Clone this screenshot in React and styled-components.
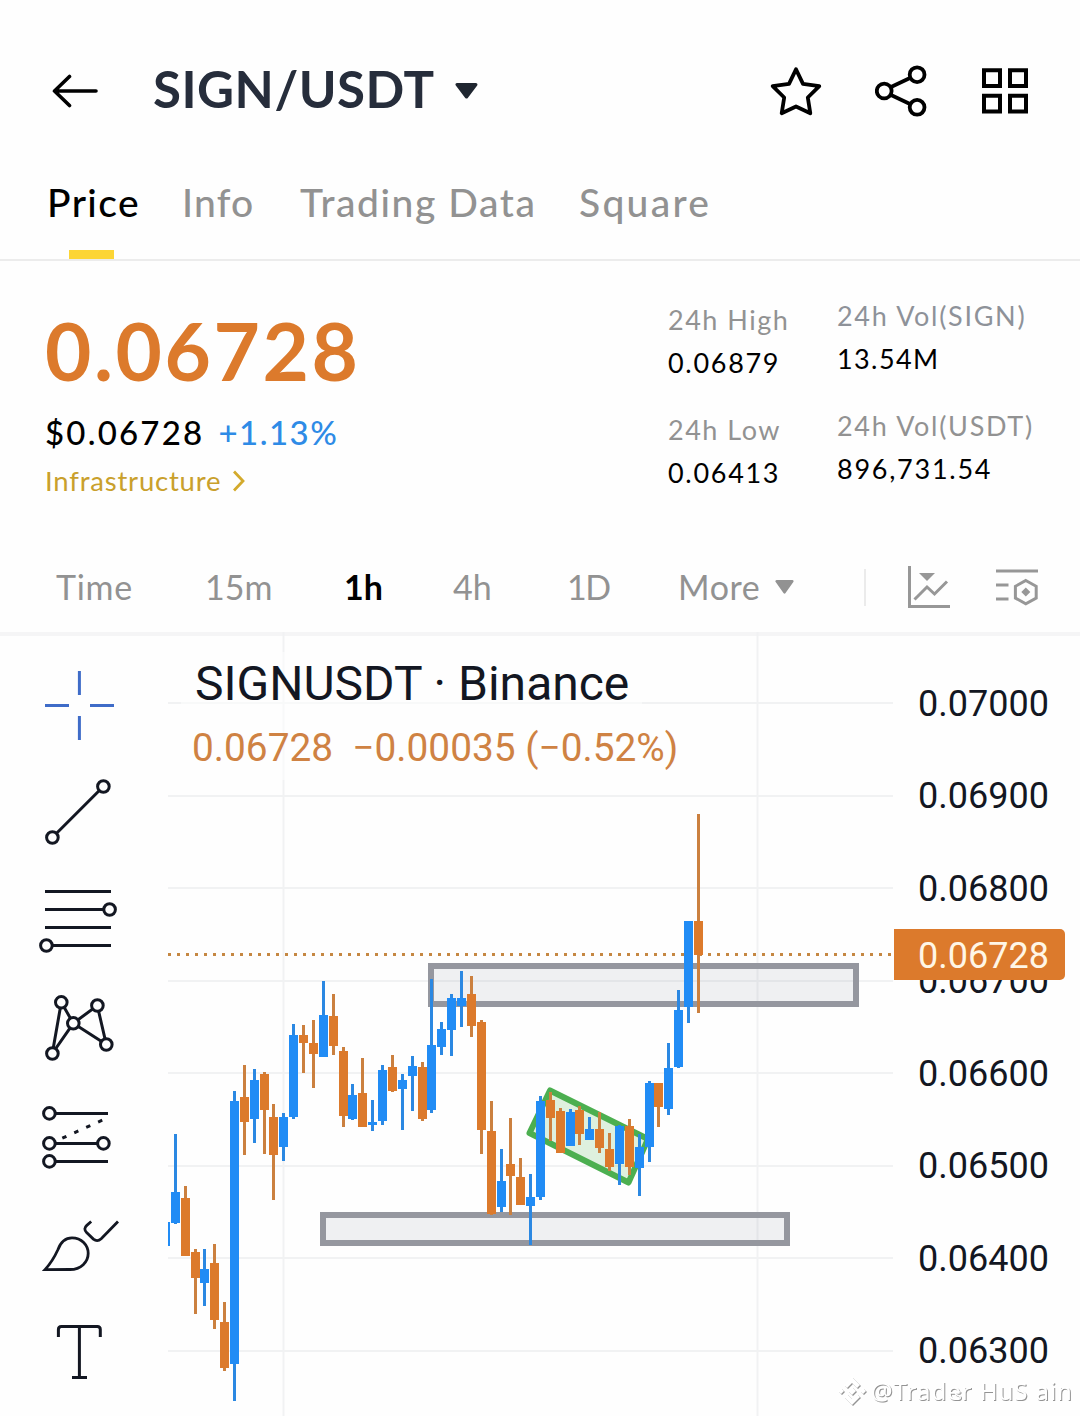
import React from "react";
import styled, { createGlobalStyle } from "styled-components";

const ORANGE = "#dc7a2c";
const BLUE = "#218cf5";

const GlobalStyle = createGlobalStyle`
  *, *::before, *::after { box-sizing: border-box; }
  body { margin: 0; background: #fefefe; }
`;

const Screen = styled.main`
  position: relative;
  width: 1080px;
  height: 1416px;
  overflow: hidden;
  display: flex;
  flex-direction: column;
  background: #fefefe;
  color: #000;
  font-family: Lato, "Open Sans", sans-serif;
  svg { display: block; flex: none; }
`;

const Text = styled.span`
  display: block;
  margin: 0;
  white-space: pre;
  font-size: ${(p) => p.$size}px;
  line-height: ${(p) => p.$line || p.$size}px;
  font-weight: ${(p) => p.$weight || 400};
  letter-spacing: ${(p) => p.$track || 0}px;
  color: ${(p) => p.$color || "inherit"};
`;

const Header = styled.header`
  height: 150px;
  padding: 32px 51px 0 52px;
  display: flex;
  align-items: center;
`;

const Pair = styled.div`
  display: flex;
  align-items: center;
  gap: 20px;
  margin-left: 55px;
  flex: 1;
  h1 { padding-bottom: 5px; }
`;

const Actions = styled.div`
  display: flex;
  align-items: center;
  gap: 53px;
`;

const Tabs = styled.nav`
  height: 111px;
  padding: 0 47px;
  display: grid;
  grid-template-columns: 135px 118px 279px auto;
  border-bottom: 2px solid #ececec;
`;

const Tab = styled.div`
  display: flex;
  flex-direction: column;
  justify-content: space-between;
  align-items: flex-start;
  padding-top: 28px;
`;

const Underline = styled.i`
  width: 45px;
  height: 9px;
  margin-left: 22px;
  background: #fcd535;
`;

const Summary = styled.section`
  height: 284px;
  display: grid;
  grid-template-columns: 668px 169px auto;
`;

const PriceBlock = styled.div`
  padding: 49px 0 0 45px;
  display: flex;
  flex-direction: column;
`;

const Line = styled.div`
  display: flex;
  align-items: center;
  gap: ${(p) => p.$gap}px;
  height: ${(p) => p.$h}px;
`;

const StatColumn = styled.dl`
  margin: 0;
  padding-top: ${(p) => p.$top}px;
  display: flex;
  flex-direction: column;
  gap: 24px;
`;

const Stat = styled.div`
  height: 86px;
`;

const Intervals = styled.nav`
  height: 87px;
  padding: 0 0 3px 56px;
  display: grid;
  grid-template-columns: 149px 139px 109px 114px 111px 186px 43px 88px auto;
  align-items: center;
`;

const Separator = styled.i`
  width: 2px;
  height: 37px;
  background: #ebebeb;
`;

const ChartArea = styled.section`
  flex: 1;
  display: grid;
  grid-template-columns: 168px 726px 186px;
  border-top: 4px solid #f5f5f6;
  font-family: Roboto, "Liberation Sans", sans-serif;
  color: #131722;
`;

const Toolbar = styled.div`
  padding-top: 15px;
`;

const Plot = styled.div`
  position: relative;
  svg { margin-top: -4px; }
`;

const Legend = styled.div`
  position: absolute;
  left: 13px;
  top: 16px;
  width: 461px;
  padding-left: 11px;
  background: rgba(254, 254, 254, 0.6);
  h2 { padding-left: 3px; }
`;

const Axis = styled.div`
  position: relative;
  padding: 22px 0 0 24px;
`;

const PriceTag = styled.div`
  position: absolute;
  left: 0;
  top: 293px;
  width: 171px;
  height: 51px;
  padding: 1px 0 0 24px;
  border-radius: 0 5px 5px 0;
  background: ${ORANGE};
`;

const Watermark = styled.div`
  position: absolute;
  left: 837px;
  top: 1375px;
  display: flex;
  align-items: center;
  gap: 4px;
  color: #fff;
  font-family: "Noto Sans", sans-serif;
  filter: drop-shadow(1px 1px 0.6px rgba(0, 0, 0, 0.42));
`;

const Stray = styled.span`
  position: absolute;
  left: 117px;
  top: 8px;
  font-size: 16px;
  line-height: 22px;
`;

const Caret = ({ w, h, color }) => (
  <svg width={w} height={h} viewBox="0 0 22 16" preserveAspectRatio="none">
    <path d="M2 1.5H20L11 14Z" fill={color} stroke={color} strokeWidth="3" strokeLinejoin="round" />
  </svg>
);

const Dots = ({ points }) => points.map(([x, y]) => <circle key={`${x},${y}`} cx={x} cy={y} r="5.8" fill="#fefefe" />);

const tools = [
  <path key="cross" stroke="#3f6cc8" d="M79.4 20V44M79.4 65V89M45 54.4H69M90 54.4H114" />,
  <g key="line"><path d="M52.3 78.5L103.3 27.5" /><Dots points={[[103.4, 27.5], [52.4, 78.5]]} /></g>,
  <g key="fib"><path d="M45 24.4H111M45 42.4H105M45 60.4H111M50 78.4H111" /><Dots points={[[109.6, 42.5], [46.4, 78.5]]} /></g>,
  <g key="pattern"><path d="M52.3 78.5L61.3 27.3L73.3 48.3L97.3 30.5L106.3 69.5L73.3 48.3Z" /><Dots points={[[61.3, 27.3], [97.4, 30.5], [73.3, 48.3], [106.3, 69.5], [52.4, 78.5]]} /></g>,
  <g key="forecast"><path d="M49 30.4H108M49 60.4H103M49 78.4H108" /><path d="M62.3 55.2L104 36.4" strokeDasharray="4.5 8.6" /><Dots points={[[49.4, 30.4], [49.4, 60.4], [103.4, 60.4], [49.4, 78.4]]} /></g>,
  <path key="brush" strokeWidth="2.8" d="M91.2 30.5L86.8 34.4Q83 37.8 86.6 41.6L93.4 48.1Q97.3 51.2 101.2 47.8L118 30.5M45 78.6Q52.5 70.5 58 58.5C60.5 51.5 65 46.8 72 46.8C81.5 46.8 88.2 54 88.2 62.3C88.2 71 81 78.5 70 78.5Z" />,
  <path key="text" d="M58.4 38V30.4Q58.4 27.4 61.4 27.4H97.3Q100.3 27.4 100.3 30.4V38M79.4 27.4V78.6M72 78.6H87" />,
];

// [x, direction, high, low, body top, body bottom]
const candles = [
  [175.5, 1, 1134, 1224, 1192, 1223], [185.5, 0, 1186, 1256, 1198, 1256],
  [195.5, 0, 1249, 1314, 1252, 1278], [204.5, 1, 1249, 1306, 1269, 1283],
  [214.5, 0, 1244, 1329, 1263, 1320], [224.5, 0, 1302, 1371, 1322, 1368],
  [234.5, 1, 1091, 1401, 1101, 1364], [244.5, 0, 1065, 1155, 1097, 1122],
  [254.5, 1, 1069, 1143, 1080, 1119], [264.5, 0, 1072, 1154, 1074, 1110],
  [273.5, 0, 1104, 1200, 1117, 1155], [283.5, 1, 1113, 1161, 1117, 1147],
  [293.5, 1, 1024, 1119, 1035, 1117], [303.5, 0, 1025, 1073, 1035, 1043],
  [313.5, 0, 1020, 1088, 1043, 1054], [323.5, 1, 981, 1057, 1015, 1057],
  [333.5, 0, 994, 1055, 1016, 1046], [343.5, 0, 1047, 1127, 1051, 1116],
  [352.5, 1, 1084, 1120, 1095, 1119], [362.5, 0, 1058, 1127, 1093, 1127],
  [372.5, 1, 1100, 1131, 1122, 1125], [382.5, 1, 1065, 1125, 1070, 1121],
  [392.5, 0, 1055, 1092, 1067, 1091], [402.5, 1, 1074, 1130, 1080, 1089],
  [412.5, 1, 1056, 1111, 1066, 1076], [422.5, 0, 1062, 1121, 1067, 1119],
  [431.5, 1, 979, 1113, 1045, 1110], [441.5, 1, 1022, 1055, 1029, 1047],
  [451.5, 1, 994, 1056, 998, 1030], [461.5, 1, 971, 1027, 998, 1006],
  [471.5, 0, 976, 1037, 994, 1026], [481.5, 0, 1020, 1154, 1022, 1130],
  [491.5, 0, 1101, 1215, 1131, 1214], [501.5, 1, 1149, 1212, 1181, 1207],
  [510.5, 0, 1118, 1215, 1164, 1176], [520.5, 0, 1158, 1205, 1177, 1205],
  [530.5, 1, 1174, 1245, 1197, 1206], [540.5, 1, 1096, 1200, 1101, 1197],
  [550.5, 0, 1092, 1141, 1100, 1118], [560.5, 0, 1108, 1153, 1111, 1153],
  [570.5, 1, 1109, 1146, 1112, 1146], [579.5, 0, 1106, 1145, 1110, 1134],
  [589.5, 1, 1117, 1140, 1129, 1140], [599.5, 0, 1112, 1153, 1129, 1148],
  [609.5, 0, 1133, 1171, 1149, 1167], [619.5, 1, 1125, 1185, 1126, 1164],
  [629.5, 0, 1119, 1175, 1126, 1167], [639.5, 1, 1134, 1196, 1147, 1168],
  [649.5, 1, 1081, 1162, 1083, 1147], [658.5, 0, 1083, 1127, 1083, 1107],
  [668.5, 1, 1043, 1115, 1068, 1109], [678.5, 1, 990, 1068, 1010, 1067],
  [688.5, 1, 921, 1023, 921, 1007], [698.5, 0, 814, 1013, 921, 955],
];

const gridRows = [703, 796, 888, 981, 1073, 1166, 1258, 1351];
const axisLabels = ["0.07000", "0.06900", "0.06800", "0.06700", "0.06600", "0.06500", "0.06400", "0.06300"];

const Chart = () => (
  <svg width="726" height="784" viewBox="168 632 726 784">
    <g stroke="#f1f2f3" strokeWidth="2">
      {gridRows.map((y) => <path key={y} d={`M168 ${y}H893`} />)}
      <path d="M283.5 632V1416M757.5 632V1416" />
    </g>
    <g fill="#787b90" fillOpacity="0.11" stroke="#95979f" strokeWidth="6">
      <rect x="431" y="966" width="425" height="38" />
      <rect x="323" y="1215" width="464" height="28" />
    </g>
    <path d="M550 1090.5L529.5 1133L628.5 1182.5L648 1139Z" fill="#4caf50" fillOpacity="0.18" stroke="#4caf50" strokeWidth="6" strokeLinejoin="round" />
    <path d="M168 954.5H894" stroke="#c58742" strokeWidth="3" strokeDasharray="3 6" />
    <rect x="168" y="1222" width="2" height="24" fill={BLUE} />
    {candles.map(([x, up, hi, lo, top, bottom]) => (
      <g key={x} fill={up ? BLUE : ORANGE}>
        <rect x={x - 1.5} y={hi} width="3" height={lo - hi} fill={up ? "#2b88e2" : "#cb803f"} />
        <rect x={x - 4.5} y={top} width="9" height={bottom - top} />
      </g>
    ))}
  </svg>
);

const GREY = "#929292";

export default function App() {
  return (
    <Screen>
      <GlobalStyle />
      <Header>
        <svg width="46" height="36" viewBox="52 73 46 36" fill="none" stroke="#000" strokeWidth="3.6" strokeLinecap="round" strokeLinejoin="round">
          <path d="M96 91H54.5M69.5 76.5L54.5 91L69.5 105.5" />
        </svg>
        <Pair>
          <Text as="h1" $size={51} $weight={700} $track={0.5} $color="#262d3b">SIGN/USDT</Text>
          <Caret w={23} h={16} color="#1f2630" />
        </Pair>
        <Actions>
          <svg width="52" height="52" viewBox="770 65 52 52" fill="none" stroke="#000" strokeWidth="3.8" strokeLinejoin="round">
            <path d="M796 69.3L803 83.8L819.3 86.2L807.8 97.5L810.3 113.3L796 106.5L781.7 113.3L784.2 97.5L772.7 86.2L789 83.8Z" />
          </svg>
          <svg width="54" height="54" viewBox="874.5 64 54 54" fill="none" stroke="#000" strokeWidth="3.8">
            <path d="M890.5 87L909.5 78M890.5 95L909.5 104" />
            <circle cx="883.7" cy="91" r="7.4" /><circle cx="916.6" cy="74.7" r="7.4" /><circle cx="916.6" cy="107.3" r="7.4" />
          </svg>
          <svg width="47" height="46" viewBox="982 68 47 46" fill="none" stroke="#000" strokeWidth="4">
            <path d="M984 70.2H1000V86H984ZM1010 70.2H1026V86H1010ZM984 95.7H1000V111.5H984ZM1010 95.7H1026V111.5H1010Z" />
          </svg>
        </Actions>
      </Header>
      <Tabs>
        <Tab><Text $size={39} $line={48} $weight={500} $track={1.4}>Price</Text><Underline /></Tab>
        <Tab><Text $size={39} $line={48} $weight={500} $track={1.2} $color={GREY}>Info</Text></Tab>
        <Tab><Text $size={39} $line={48} $weight={500} $track={1.55} $color={GREY}>Trading Data</Text></Tab>
        <Tab><Text $size={39} $line={48} $weight={500} $track={2.3} $color={GREY}>Square</Text></Tab>
      </Tabs>
      <Summary>
        <PriceBlock>
          <Text $size={80} $weight={700} $track={2.6} $color={ORANGE}>0.06728</Text>
          <Line $h={84} $gap={14}>
            <Text $size={33} $weight={500} $track={2.2}>$0.06728</Text>
            <Text $size={33} $weight={500} $track={1.5} $color="#2e8be6">+1.13%</Text>
          </Line>
          <Line $h={14} $gap={12}>
            <Text $size={27.5} $track={0.8} $color="#c9a02c">Infrastructure</Text>
            <svg width="12" height="22" viewBox="0 0 12 22" fill="none" stroke="#d3aa2c" strokeWidth="2.8"><path d="M1 1.5L10 11L1 20.5" /></svg>
          </Line>
        </PriceBlock>
        <StatColumn $top={37}>
          <Stat><Text as="dt" $size={27} $line={43} $track={1.5} $color={GREY}>24h High</Text><Text as="dd" $size={27} $line={43} $track={1.7}>0.06879</Text></Stat>
          <Stat><Text as="dt" $size={27} $line={43} $track={1.5} $color={GREY}>24h Low</Text><Text as="dd" $size={27} $line={43} $track={1.7}>0.06413</Text></Stat>
        </StatColumn>
        <StatColumn $top={33}>
          <Stat><Text as="dt" $size={27} $line={43} $track={1.7} $color="#8e9299">24h Vol(SIGN)</Text><Text as="dd" $size={27} $line={43} $track={1.4}>13.54M</Text></Stat>
          <Stat><Text as="dt" $size={27} $line={43} $track={1.7} $color={GREY}>24h Vol(USDT)</Text><Text as="dd" $size={27} $line={43} $track={1.75}>896,731.54</Text></Stat>
        </StatColumn>
      </Summary>
      <Intervals>
        <Text $size={34} $track={0.7} $color={GREY}>Time</Text>
        <Text $size={34} $color={GREY}>15m</Text>
        <Text $size={34} $weight={700}>1h</Text>
        <Text $size={34} $color={GREY}>4h</Text>
        <Text $size={34} $track={-1.5} $color={GREY}>1D</Text>
        <Line $h={34} $gap={14.5}><Text $size={34} $track={0.6} $color={GREY}>More</Text><Caret w={19} h={14} color="#929292" /></Line>
        <Separator />
        <svg width="44" height="44" viewBox="907 565 44 44" fill="none" stroke="#979797" strokeWidth="3">
          <path d="M909.5 566V606.5H950M914.5 599.5L927 587L934.5 594L947 581.5" /><path d="M919 573H935L927 581Z" fill="#979797" stroke="none" />
        </svg>
        <svg width="44" height="44" viewBox="995 565 44 44" fill="none" stroke="#979797" strokeWidth="3">
          <path d="M996 571H1038M996 585H1008.5M996 599H1008.5M1025.8 580.5L1036.2 586.3V598L1025.8 603.8L1015.4 598V586.3Z" /><path d="M1025.8 587.5L1030.3 592L1025.8 596.5L1021.3 592Z" fill="#979797" stroke="none" />
        </svg>
      </Intervals>
      <ChartArea>
        <Toolbar>
          {tools.map((icon) => (
            <svg key={icon.key} width="168" height="108" fill="none" stroke="#131722" strokeWidth="3">{icon}</svg>
          ))}
        </Toolbar>
        <Plot>
          <Chart />
          <Legend>
            <Text as="h2" $size={48} $line={64}>SIGNUSDT · Binance</Text>
            <Text $size={38.8} $line={64} $color="#cf8243">0.06728  −0.00035 (−0.52%)</Text>
          </Legend>
        </Plot>
        <Axis>
          {axisLabels.map((label) => <Text key={label} $size={36} $line={92.45}>{label}</Text>)}
          <PriceTag><Text $size={36} $line={52} $color="#fff6e6">0.06728</Text></PriceTag>
        </Axis>
      </ChartArea>
      <Watermark>
        <svg width="30" height="30" viewBox="0 0 30 30" fill="#fff">
          <path d="M15 1L23 9L20 12L15 7L10 12L7 9ZM15 29L23 21L20 18L15 23L10 18L7 21ZM4 12L7 15L4 18L1 15ZM26 12L29 15L26 18L23 15ZM15 11L19 15L15 19L11 15Z" />
        </svg>
        <Text $size={24} $line={32} $track={0.95}>@Trader HuS ain</Text>
        <Stray>s</Stray>
      </Watermark>
    </Screen>
  );
}
